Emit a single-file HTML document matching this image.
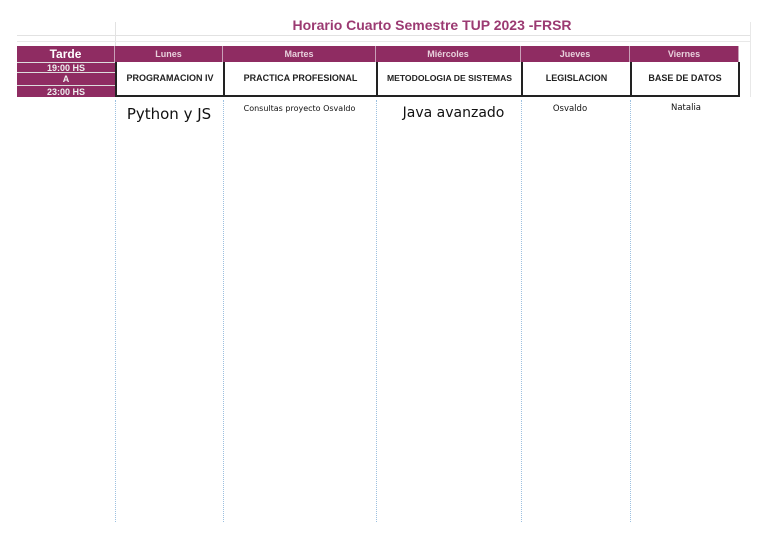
<!DOCTYPE html>
<html><head><style>
body{margin:0;width:768px;height:543px;background:#fff;position:relative;overflow:hidden;font-family:"Liberation Sans",Arial,sans-serif}
.a{position:absolute}
.t{left:0;width:768px;top:17px;text-align:center;padding-left:96px;box-sizing:border-box;font-weight:bold;font-size:14px;color:#9b3a72}
.h{background:#8f2c62;color:#e8d0dc;font-weight:bold;font-size:9px;text-align:center;line-height:16px;top:46px;height:16px;border-right:1px solid #c9a0b8;box-sizing:border-box}
.c{top:62px;height:35px;border:2px solid #222;border-top:none;background:#fff;box-sizing:border-box;font-weight:bold;font-size:9px;text-align:center;line-height:32px;color:#222;white-space:nowrap;overflow:hidden}
.s{background:#8f2c62;color:#eee;font-weight:bold;font-size:9px;text-align:center;left:17px;width:98px;border-top:1px solid #ddd;box-sizing:border-box}
.v{top:100px;height:422px;border-left:1px dotted #9cc0e0}
.n{font-family:"DejaVu Sans","Liberation Sans",sans-serif;color:#111;text-align:center}
</style></head><body>
<div class="a" style="left:115px;top:22px;height:24px;border-left:1px solid #e2e2e2"></div>
<div class="a" style="left:17px;top:35px;width:733px;border-top:1px solid #e2e2e2"></div>
<div class="a" style="left:17px;top:41px;width:733px;border-top:1px solid #e8e8e8"></div>
<div class="a" style="left:750px;top:22px;height:75px;border-left:1px solid #e8e8e8"></div>
<div class="a t">Horario Cuarto Semestre TUP 2023 -FRSR</div>
<div class="a h" style="left:17px;width:98px;font-size:12px;color:#fff">Tarde</div>
<div class="a h" style="left:115px;width:108px">Lunes</div>
<div class="a h" style="left:223px;width:153px">Martes</div>
<div class="a h" style="left:376px;width:145px">Miércoles</div>
<div class="a h" style="left:521px;width:109px">Jueves</div>
<div class="a h" style="left:630px;width:109px">Viernes</div>
<div class="a s" style="top:62px;height:10px;line-height:10px">19:00 HS</div>
<div class="a s" style="top:72px;height:13px;line-height:13px">A</div>
<div class="a s" style="top:85px;height:12px;line-height:12px">23:00 HS</div>
<div class="a c" style="left:115px;width:110px">PROGRAMACION IV</div>
<div class="a c" style="left:223px;width:155px">PRACTICA PROFESIONAL</div>
<div class="a c" style="left:376px;width:147px;font-size:8.6px">METODOLOGIA DE SISTEMAS</div>
<div class="a c" style="left:521px;width:111px">LEGISLACION</div>
<div class="a c" style="left:630px;width:110px">BASE DE DATOS</div>
<div class="a v" style="left:115px"></div>
<div class="a v" style="left:223px"></div>
<div class="a v" style="left:376px"></div>
<div class="a v" style="left:521px"></div>
<div class="a v" style="left:630px"></div>
<div class="a n" style="left:115px;width:108px;top:105px;font-size:15px">Python y JS</div>
<div class="a n" style="left:223px;width:153px;top:104px;font-size:8px">Consultas proyecto Osvaldo</div>
<div class="a n" style="left:376px;width:155px;top:105px;font-size:14px">Java avanzado</div>
<div class="a n" style="left:521px;width:98px;top:104px;font-size:8.5px">Osvaldo</div>
<div class="a n" style="left:630px;width:112px;top:103px;font-size:8.5px">Natalia</div>
</body></html>
